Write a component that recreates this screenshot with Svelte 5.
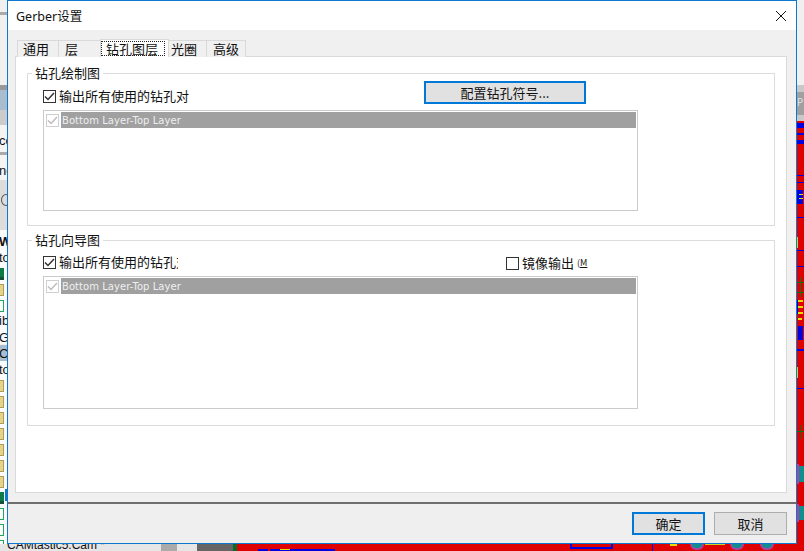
<script lang="ts">
	const tabs = [
		{ label: '通用', w: 42, pad: 5 },
		{ label: '层', w: 43, pad: 6 },
		{ label: '钻孔图层', w: 69, pad: 1, active: true },
		{ label: '光圈', w: 39, pad: 2 },
		{ label: '高级', w: 40, pad: 6 }
	];

	// slivers of the application behind the dialog
	const leftRows = [
		{ y: 0, h: 12, c: '#f0f0f0' },
		{ y: 12, h: 3, c: '#aaaaaa' },
		{ y: 15, h: 70, c: '#f0f0f0' },
		{ y: 85, h: 5, c: '#999999' },
		{ y: 90, h: 20, c: '#a9bdcf' },
		{ y: 110, h: 15, c: '#cccccc' },
		{ y: 125, h: 27, c: '#f4f4f4' },
		{ y: 152, h: 3, c: '#aaaaaa' },
		{ y: 155, h: 25, c: '#f4f4f4' },
		{ y: 180, h: 50, c: '#dcdcdc' },
		{ y: 230, h: 114, c: '#fbfbfb' },
		{ y: 345, h: 16, c: '#a9bdcf' },
		{ y: 361, h: 190, c: '#fbfbfb' }
	];
	const leftIcons = [
		{ y: 268, kind: 'dark' },
		{ y: 284, kind: 'folder' },
		{ y: 300, kind: 'sheet' },
		{ y: 380, kind: 'folder' },
		{ y: 396, kind: 'folder' },
		{ y: 412, kind: 'folder' },
		{ y: 428, kind: 'folder' },
		{ y: 444, kind: 'folder' },
		{ y: 460, kind: 'folder' },
		{ y: 476, kind: 'folder' },
		{ y: 492, kind: 'dark' },
		{ y: 508, kind: 'sheet' },
		{ y: 524, kind: 'sheet' },
		{ y: 540, kind: 'sheet' }
	];
	const leftLetters = [
		{ y: 133, t: 'ce' },
		{ y: 163, t: 'ne' },
		{ y: 234, t: 'W', bold: true },
		{ y: 250, t: 'to' },
		{ y: 313, t: 'ib' },
		{ y: 330, t: 'Ge' },
		{ y: 346, t: 'C.' },
		{ y: 362, t: 'to' }
	];
	const rightLines = [
		{ y: 123, h: 5, x: 0, w: 7, c: '#0000e0' },
		{ y: 133, h: 2, x: 0, w: 7, c: '#0000e0' },
		{ y: 140, h: 4, x: 0, w: 7, c: '#0000e0' },
		{ y: 175, h: 1, x: 0, w: 7, c: '#0000e0' },
		{ y: 182, h: 1, x: 0, w: 7, c: '#0000e0' },
		{ y: 190, h: 14, x: 0, w: 6, c: '#0000e0' },
		{ y: 194, h: 1, x: 2, w: 4, c: '#e8e000' },
		{ y: 198, h: 1, x: 2, w: 4, c: '#e8e000' },
		{ y: 217, h: 1, x: 0, w: 7, c: '#0000e0' },
		{ y: 237, h: 11, x: 0, w: 1, c: '#c8d820' },
		{ y: 250, h: 1, x: 0, w: 7, c: '#0000e0' },
		{ y: 266, h: 1, x: 0, w: 7, c: '#0000e0' },
		{ y: 277, h: 20, x: 3, w: 1, c: '#156f15' },
		{ y: 282, h: 1, x: 0, w: 7, c: '#156f15' },
		{ y: 292, h: 1, x: 0, w: 7, c: '#156f15' },
		{ y: 300, h: 14, x: 0, w: 1, c: '#0000e0' },
		{ y: 300, h: 2, x: 1, w: 5, c: '#e8e000' },
		{ y: 306, h: 2, x: 1, w: 5, c: '#e8e000' },
		{ y: 312, h: 2, x: 1, w: 5, c: '#e8e000' },
		{ y: 318, h: 2, x: 1, w: 4, c: '#e8e000' },
		{ y: 326, h: 14, x: 1, w: 5, c: '#0000e0' },
		{ y: 349, h: 2, x: 0, w: 7, c: '#0000e0' },
		{ y: 367, h: 11, x: 0, w: 1, c: '#c8d820' },
		{ y: 388, h: 1, x: 0, w: 7, c: '#0000e0' },
		{ y: 425, h: 14, x: 4, w: 1, c: '#156f15' },
		{ y: 431, h: 1, x: 0, w: 7, c: '#156f15' },
		{ y: 464, h: 20, x: 0, w: 2, c: '#b040a0' },
		{ y: 466, h: 16, x: 2, w: 5, c: '#0f8f8f' },
		{ y: 504, h: 18, x: 0, w: 2, c: '#b040a0' },
		{ y: 506, h: 14, x: 2, w: 5, c: '#0f8f8f' }
	];
	const boardBits = [
		{ x: 21, y: 5, w: 10, h: 2, c: '#0000e0' },
		{ x: 33, y: 5, w: 65, h: 2, c: '#0000e0' },
		{ x: 43, y: 5, w: 10, h: 1, c: '#e8e000' },
		{ x: 333, y: 0, w: 43, h: 5, c: '#0000e0' },
		{ x: 335, y: 0, w: 39, h: 3, c: '#df0000' },
		{ x: 415, y: 0, w: 1, h: 7, c: '#0000e0' },
		{ x: 433, y: 0, w: 7, h: 2, c: '#e8e000' },
		{ x: 468, y: 0, w: 20, h: 1, c: '#c8d820' }
	];
	const pads = [453, 493, 523];
</script>

<div class="desktop">
	<aside class="behind-left">
		{#each leftRows as r}
			<i style="top:{r.y}px;height:{r.h}px;background:{r.c}"></i>
		{/each}
		{#each leftIcons as r}
			<i class="ico {r.kind}" style="top:{r.y}px"></i>
		{/each}
		{#each leftLetters as r}
			<span class:bold={r.bold} style="top:{r.y}px">{r.t}</span>
		{/each}
		<b class="ring"></b>
		<b class="tick"></b>
	</aside>

	<aside class="behind-right">
		<div class="p-row">P</div>
		{#each rightLines as r}
			<i style="top:{r.y}px;left:{r.x}px;width:{r.w}px;height:{r.h}px;background:{r.c}"></i>
		{/each}
	</aside>

	<div class="behind-bottom">
		<span class="cam">CAMtastic5.Cam *</span>
		<i class="grey-a"></i>
		<i class="grey-b"></i>
		<i class="green"></i>
		<div class="board">
			{#each boardBits as b}
				<i style="left:{b.x}px;top:{b.y}px;width:{b.w}px;height:{b.h}px;background:{b.c}"></i>
			{/each}
			{#each pads as x}
				<i class="pad" style="left:{x}px"></i>
			{/each}
		</div>
	</div>

	<section class="dialog">
		<header class="title">
			<span>Gerber设置</span>
			<svg width="12" height="12" viewBox="0 0 12 12" aria-label="关闭">
				<path d="M1 1L11 11M11 1L1 11" stroke="#111" stroke-width="1" fill="none" />
			</svg>
		</header>

		<div class="body">
			<nav class="tabs">
				{#each tabs as tab}
					<div class="tab" class:active={tab.active} style="width:{tab.w}px;padding-left:{tab.pad}px">
						{#if tab.active}<span class="focus">{tab.label}</span>{:else}{tab.label}{/if}
					</div>
				{/each}
			</nav>

			<div class="panel">
				<fieldset class="group first">
					<legend>钻孔绘制图</legend>
					<div class="row top-a">
						<label class="check">
							<span class="box">
								<svg width="11" height="11" viewBox="0 0 11 11"><path d="M1 5.5L4 8.5L10 2" stroke="#333" stroke-width="1.5" fill="none" /></svg>
							</span>
							输出所有使用的钻孔对
						</label>
						<button class="btn default cfg">配置钻孔符号...</button>
					</div>
					<div class="list short">
						<div class="item">
							<span class="mini">
								<svg width="11" height="11" viewBox="0 0 11 11"><path d="M1 5.5L4 8.5L10 2" stroke="#bdbdbd" stroke-width="1.5" fill="none" /></svg>
							</span>
							<span class="bar">Bottom Layer-Top Layer</span>
						</div>
					</div>
				</fieldset>

				<fieldset class="group second">
					<legend>钻孔向导图</legend>
					<div class="row top-b">
						<label class="check">
							<span class="box">
								<svg width="11" height="11" viewBox="0 0 11 11"><path d="M1 5.5L4 8.5L10 2" stroke="#333" stroke-width="1.5" fill="none" /></svg>
							</span>
							<span class="clip-text">输出所有使用的钻孔对</span>
						</label>
						<label class="check mirror">
							<span class="box"></span>
							镜像输出 <span class="cut">(<u>M</u></span>
						</label>
					</div>
					<div class="list tall">
						<div class="item">
							<span class="mini">
								<svg width="11" height="11" viewBox="0 0 11 11"><path d="M1 5.5L4 8.5L10 2" stroke="#bdbdbd" stroke-width="1.5" fill="none" /></svg>
							</span>
							<span class="bar">Bottom Layer-Top Layer</span>
						</div>
					</div>
				</fieldset>
			</div>

			<footer class="actions">
				<button class="btn default small">确定</button>
				<button class="btn small">取消</button>
			</footer>
		</div>
	</section>
</div>

<style>
	:global(body) {
		margin: 0;
	}
	.desktop {
		position: relative;
		width: 804px;
		height: 551px;
		overflow: hidden;
		background: #df0000;
		font-family: 'Noto Sans CJK SC', 'Liberation Sans', sans-serif;
		font-size: 13px;
		color: #111;
	}
	.behind-left {
		position: absolute;
		left: 0;
		top: 0;
		width: 8px;
		height: 551px;
		overflow: hidden;
		background: #f0f0f0;
	}
	.behind-left i {
		position: absolute;
		left: 0;
		width: 8px;
	}
	.behind-left i.ico {
		box-sizing: border-box;
		width: 4px;
		height: 12px;
	}
	.folder {
		background: #e6d48a;
		border: 1px solid #b09c58;
		border-left: 0;
	}
	.sheet {
		background: #fff;
		border: 1px solid #1fa65a;
		border-left: 0;
	}
	.dark {
		background: #0b7a45;
		border-bottom: 3px solid #17503a;
	}
	.behind-left span {
		position: absolute;
		left: -1px;
		font: 13px/15px 'Liberation Sans', sans-serif;
	}
	.behind-left span.bold {
		font-weight: 700;
	}
	.ring {
		position: absolute;
		left: 1px;
		top: 194px;
		width: 10px;
		height: 12px;
		box-sizing: border-box;
		border: 1px solid #555;
		border-radius: 50%;
	}
	.tick {
		position: absolute;
		left: 5px;
		top: 489px;
		width: 2px;
		height: 12px;
		background: #0c78d0;
	}
	.behind-right {
		position: absolute;
		left: 797px;
		top: 0;
		width: 7px;
		height: 551px;
		background: #df0000;
		overflow: hidden;
	}
	.behind-right i {
		position: absolute;
	}
	.behind-right::before {
		content: '';
		position: absolute;
		left: 0;
		top: 0;
		width: 7px;
		height: 85px;
		background: #f0f0f0;
	}
	.p-row {
		position: absolute;
		left: 0;
		top: 85px;
		width: 7px;
		height: 36px;
		background: linear-gradient(#c8c8c8 0 7px, #a0a0a0 7px 30px, #c8c8c8 30px);
		color: #ddd;
		font: 10px/36px 'DejaVu Sans', sans-serif;
	}
	.behind-bottom {
		position: absolute;
		left: 0;
		top: 544px;
		width: 804px;
		height: 7px;
		background: #e6e6e6;
		overflow: hidden;
	}
	.cam {
		position: absolute;
		left: 7px;
		top: -6px;
		font: 12px/14px 'Liberation Sans', sans-serif;
	}
	.behind-bottom > i {
		position: absolute;
		top: 0;
		height: 7px;
	}
	.grey-a {
		left: 161px;
		width: 16px;
		background: #aaa;
	}
	.grey-b {
		left: 197px;
		width: 36px;
		background: #666;
	}
	.green {
		left: 233px;
		width: 4px;
		background: #0b6b2a;
	}
	.board {
		position: absolute;
		left: 237px;
		top: 0;
		width: 567px;
		height: 7px;
		background: #df0000;
	}
	.board i {
		position: absolute;
	}
	.board .pad {
		top: 0;
		width: 14px;
		height: 6px;
		box-sizing: border-box;
		background: #0f8f8f;
		border: 2px solid #b040a0;
		border-top: 0;
		border-radius: 0 0 7px 7px;
	}

	.dialog {
		position: absolute;
		left: 7px;
		top: 0;
		width: 788px;
		height: 542px;
		display: flex;
		flex-direction: column;
		background: #f0f0f0;
		border: 1px solid #0c78d0;
	}
	.title {
		height: 29px;
		flex: none;
		display: flex;
		align-items: center;
		justify-content: space-between;
		padding: 0 9px 0 8px;
		background: #fff;
		font-family: 'Noto Sans', 'Noto Sans CJK SC', sans-serif;
		font-size: 12.5px;
	}
	.body {
		flex: 1;
		display: flex;
		flex-direction: column;
		padding: 0 9px 0 7px;
		min-height: 0;
	}
	.tabs {
		display: flex;
		height: 17px;
		margin-top: 10px;
		padding-left: 2px;
		margin-bottom: -1px;
		position: relative;
		z-index: 1;
	}
	.tab {
		box-sizing: border-box;
		height: 17px;
		border: 1px solid #d9d9d9;
		border-bottom: 0;
		margin-right: -1px;
		background: #f0f0f0;
		line-height: 15px;
		white-space: nowrap;
	}
	.tab.active {
		background: #fff;
		height: 18px;
		margin-top: -1px;
		padding-top: 1px;
	}
	.focus {
		display: inline-block;
		outline: 1px dotted #222;
		height: 13px;
		line-height: 13px;
		padding: 0 6px 0 4px;
	}
	.panel {
		box-sizing: border-box;
		flex: none;
		height: 437px;
		background: #fff;
		border: 1px solid #d9d9d9;
		padding: 9px 11px 0;
	}
	.group {
		box-sizing: border-box;
		position: relative;
		margin: 0;
		padding: 0 0 0 15px;
		border: 1px solid #dcdcdc;
		min-width: 0;
	}
	.group legend {
		padding: 0 3px;
		margin-left: -11px;
		line-height: 14px;
		height: 14px;
	}
	.first {
		height: 160px;
	}
	.second {
		height: 193px;
		margin-top: 7px;
	}
	.row {
		position: relative;
		display: flex;
		height: 20px;
		align-items: center;
	}
	.top-a {
		margin-top: 6px;
		margin-bottom: 4px;
	}
	.top-b {
		margin-top: 5px;
		margin-bottom: 4px;
	}
	.check {
		display: flex;
		align-items: center;
		gap: 3px;
		line-height: 16px;
		white-space: nowrap;
	}
	.box {
		box-sizing: border-box;
		flex: none;
		width: 13px;
		height: 13px;
		border: 1px solid #333;
		background: #fff;
		display: flex;
		align-items: center;
		justify-content: center;
	}
	.clip-text {
		display: inline-block;
		width: 119px;
		overflow: hidden;
	}
	.mirror {
		position: absolute;
		left: 463px;
		top: 3px;
	}
	.cut {
		display: inline-block;
		width: 12px;
		overflow: hidden;
		font-size: 9px;
	}
	.btn {
		box-sizing: border-box;
		font: inherit;
		color: inherit;
		padding: 0;
		background: #e1e1e1;
		border: 1px solid #adadad;
		cursor: default;
	}
	.btn.default {
		border: 2px solid #0078d7;
	}
	.cfg {
		position: absolute;
		left: 381px;
		top: -5px;
		width: 162px;
		height: 23px;
	}
	.list {
		box-sizing: border-box;
		width: 595px;
		border: 1px solid #cbcbcb;
		padding: 1px;
		background: #fff;
	}
	.short {
		height: 101px;
	}
	.tall {
		height: 133px;
	}
	.item {
		display: flex;
		align-items: center;
		height: 16px;
		gap: 2px;
	}
	.mini {
		box-sizing: border-box;
		flex: none;
		width: 13px;
		height: 13px;
		margin-left: 1px;
		border: 1px solid #cfcfcf;
		display: flex;
		align-items: center;
		justify-content: center;
	}
	.bar {
		flex: 1;
		height: 16px;
		background: #a0a0a0;
		color: #efefef;
		padding-left: 1px;
		font: 10px/17px 'DejaVu Sans', sans-serif;
		letter-spacing: 0.05px;
	}
	.actions {
		flex: 1;
		display: flex;
		justify-content: flex-end;
		align-items: flex-start;
		gap: 9px;
		margin: 9px -9px 0 -7px;
		padding: 8px 9px 0 0;
		border-top: 2px solid #6e6e6e;
		background: #efefef;
	}
	.small {
		width: 73px;
		height: 23px;
	}
</style>
